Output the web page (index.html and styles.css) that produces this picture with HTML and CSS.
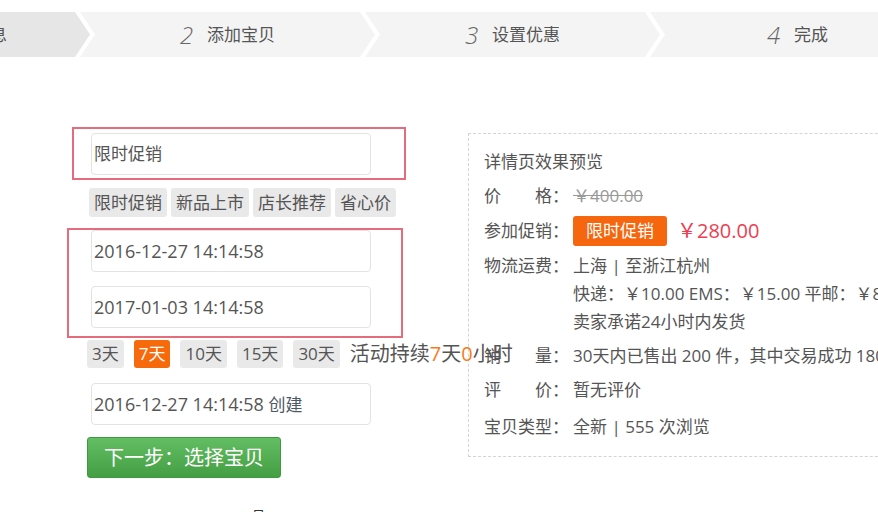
FILE: index.html
```html
<!DOCTYPE html>
<html lang="zh-CN">
<head>
<meta charset="utf-8">
<title>设置优惠</title>
<link rel="stylesheet" href="styles.css">
</head>
<body>
<div class="steps">
  <div class="step done"><span class="num">1</span><span class="label">填写基本信息</span></div>
  <div class="step"><span class="num">2</span><span class="label">添加宝贝</span></div>
  <div class="step"><span class="num">3</span><span class="label">设置优惠</span></div>
  <div class="step"><span class="num">4</span><span class="label">完成</span></div>
</div>

<div class="main">
  <div class="form">
    <div class="field name">限时促销</div>
    <div class="tags">
      <span class="tag">限时促销</span>
      <span class="tag">新品上市</span>
      <span class="tag">店长推荐</span>
      <span class="tag">省心价</span>
    </div>
    <div class="field start">2016-12-27 14:14:58</div>
    <div class="field end">2017-01-03 14:14:58</div>
    <div class="days">
      <span class="day">3天</span>
      <span class="day active">7天</span>
      <span class="day">10天</span>
      <span class="day">15天</span>
      <span class="day">30天</span>
      <span class="duration">活动持续<em>7</em>天<em>0</em>小时</span>
    </div>
    <div class="field created-at">2016-12-27 14:14:58 <span class="created">创建</span></div>
    <button class="next">下一步：选择宝贝</button>
    <div class="mark mark-name"></div>
    <div class="mark mark-time"></div>
  </div>

  <div class="preview">
    <div class="row title">详情页效果预览</div>
    <div class="row"><span class="key">价格</span><span class="colon">：</span><span class="price-old">￥400.00</span></div>
    <div class="row promo"><span class="key">参加促销</span><span class="colon">：</span><span class="badge">限时促销</span><span class="price-now">￥280.00</span></div>
    <div class="row"><span class="key">物流运费</span><span class="colon">：</span><span>上海 | 至浙江杭州</span></div>
    <div class="row sub">快递：￥10.00 EMS：￥15.00 平邮：￥8.00</div>
    <div class="row sub">卖家承诺24小时内发货</div>
    <div class="row"><span class="key">销量</span><span class="colon">：</span><span>30天内已售出 200 件，其中交易成功 180 件</span></div>
    <div class="row"><span class="key">评价</span><span class="colon">：</span><span>暂无评价</span></div>
    <div class="row last"><span class="key">宝贝类型</span><span class="colon">：</span><span>全新 | 555 次浏览</span></div>
  </div>
</div>

<div class="footer"><span class="glyph">日</span></div>
</body>
</html>
```
FILE: styles.css
```css
* { box-sizing: border-box; }

html, body {
  margin: 0;
  padding: 0;
}

body {
  width: 878px;
  height: 512px;
  overflow: hidden;
  background: #fff;
  font-family: "Open Sans", "Noto Sans CJK SC", sans-serif;
  color: #555;
}

/* ---------- step bar ---------- */
.steps {
  display: flex;
  height: 45px;
  margin: 12px 0 0 -205px;
}

.step {
  flex: 0 0 295px;
  height: 45px;
  background: #f4f4f4;
  clip-path: polygon(0 0, calc(100% - 15px) 0, 100% 50%, calc(100% - 15px) 100%, 0 100%, 15px 50%);
  display: flex;
  align-items: center;
  justify-content: center;
  gap: 14px;
}

.step + .step { margin-left: -10px; }

.step.done { background: #e6e6e6; }

.step .num {
  font-size: 24px;
  font-style: italic;
  font-weight: 300;
  color: #666;
  line-height: 1;
}

.step .label {
  font-size: 17px;
  line-height: 1;
  color: #555;
}

/* ---------- main ---------- */
.main {
  display: flex;
  margin-top: 76px;
  padding-left: 87px;
}

.form {
  position: relative;
  flex: 0 0 381px;
  min-width: 0;
  display: flex;
  flex-direction: column;
  align-items: flex-start;
}

.field {
  width: 280px;
  height: 42px;
  margin-left: 4px;
  padding-left: 2px;
  border: 1px solid #e3e3e3;
  border-radius: 4px;
  background: #fff;
  font-size: 18px;
  line-height: 40px;
  color: #555;
  white-space: nowrap;
}

.field.name { font-size: 17px; }
.field.start { margin-top: 13px; }
.field.end { margin-top: 14px; }
.field.created-at { margin-top: 15px; }

.created { color: #4d5866; font-size: 17px; }

.tags {
  display: flex;
  gap: 4px;
  margin: 13px 0 0 2px;
}

.tag, .day {
  padding: 0 5px;
  background: #e9e9e9;
  border-radius: 3px;
  font-size: 17px;
  color: #555;
}

.tag { height: 29px; line-height: 29px; }

.days {
  display: flex;
  align-items: center;
  gap: 10px;
  margin-top: 12px;
  white-space: nowrap;
}

.day { height: 28px; line-height: 28px; }

.day.active {
  background: #f76a0c;
  color: #fff;
}

.duration {
  font-size: 20px;
  line-height: 28px;
  color: #555;
}

.duration em {
  font-style: normal;
  color: #f77b1c;
}

.next {
  margin-top: 12px;
  width: 194px;
  height: 41px;
  padding: 0;
  border: 1px solid #3f9a3f;
  border-radius: 3px;
  background: linear-gradient(#63be63, #449e44);
  color: #fff;
  font-family: "Open Sans", "Noto Sans CJK SC", sans-serif;
  font-size: 20px;
  line-height: 39px;
}

/* red annotation boxes drawn over the form */
.mark {
  position: absolute;
  border: 2px solid #e46c7c;
  pointer-events: none;
}

.mark-name { left: -15px; top: -6px; width: 334px; height: 53px; }
.mark-time { left: -20px; top: 95px; width: 336px; height: 110px; }

/* ---------- preview ---------- */
.preview {
  flex: 0 0 450px;
  height: 324px;
  padding: 14px 0 0 15px;
  border: 1px dashed #d4d4d4;
  font-size: 17px;
  color: #555;
  white-space: nowrap;
}

.row {
  display: flex;
  align-items: center;
  height: 28px;
  line-height: 28px;
  margin-top: 6px;
}

.row.title { margin-top: 0; }
.row.sub { margin-top: 0; padding-left: 89px; }
.row.promo { height: 30px; }
.row.last { margin-top: 9px; }

.key {
  width: 68px;
  text-align: justify;
  text-align-last: justify;
}

.colon { width: 21px; }

.price-old {
  color: #999;
  text-decoration: line-through;
}

.badge {
  height: 30px;
  line-height: 30px;
  padding: 0 13px;
  border-radius: 3px;
  background: #f5660e;
  color: #fff;
}

.price-now {
  margin-left: 10px;
  font-size: 20px;
  color: #ee3d52;
}

/* ---------- footer ---------- */
.footer {
  margin-top: 29px;
  padding-left: 252px;
  line-height: 14px;
}

.glyph {
  font-size: 13px;
  color: #333;
}
```
